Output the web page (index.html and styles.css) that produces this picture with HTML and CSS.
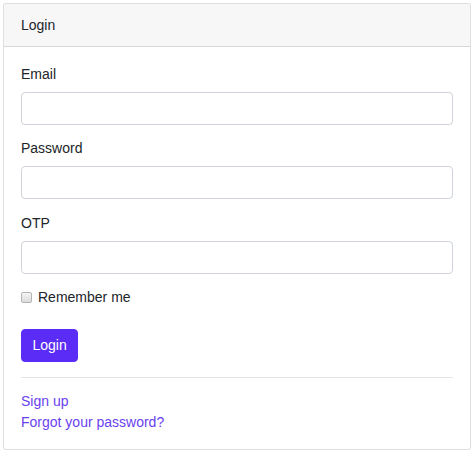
FILE: index.html
```html
<!DOCTYPE html>
<html lang="en">
<head>
<meta charset="utf-8">
<title>Login</title>
<link rel="stylesheet" href="styles.css">
</head>
<body>
<div class="card">
  <div class="card-header">Login</div>
  <div class="card-body">
    <form class="form">
      <div class="form-group">
        <label class="label" for="email">Email</label>
        <input class="form-control" id="email" type="email">
      </div>
      <div class="form-group">
        <label class="label" for="password">Password</label>
        <input class="form-control" id="password" type="password">
      </div>
      <div class="form-group">
        <label class="label" for="otp">OTP</label>
        <input class="form-control" id="otp" type="text">
      </div>
      <div class="form-check">
        <input class="check" id="remember" type="checkbox">
        <label class="check-label" for="remember">Remember me</label>
      </div>
      <button class="btn" type="button">Login</button>
    </form>
    <hr class="divider">
    <div class="links">
      <a class="link" href="#">Sign up</a>
      <a class="link" href="#">Forgot your password?</a>
    </div>
  </div>
</div>
</body>
</html>
```

FILE: styles.css
```css
* { box-sizing: border-box; }
html, body { background: #fff; }
body {
  margin: 3px 3px 0 3px;
  font-family: "Liberation Sans", Arial, sans-serif;
  font-size: 14px;
  line-height: 21px;
  color: #212529;
}
.card {
  border: 1px solid rgba(0,0,0,0.125);
  border-radius: 3px;
  background: #fff;
}
.card-header {
  background: #f7f7f7;
  border-bottom: 1px solid rgba(0,0,0,0.125);
  padding: 10.5px 17px;
  border-radius: 3px 3px 0 0;
}
.card-body {
  padding: 16.5px 17px 17px;
}
.form { display: flex; flex-direction: column; }
.form-group {
  display: flex;
  flex-direction: column;
  margin-bottom: 13.5px;
}
.label { margin-bottom: 7px; }
.form-control {
  height: 33px;
  width: 100%;
  border: 1px solid #ced4da;
  border-radius: 4px;
  background: #fff;
  font: inherit;
  padding: 5px 10.5px;
}
.form-check {
  display: flex;
  align-items: center;
  margin-bottom: 21px;
}
.check {
  appearance: none;
  -webkit-appearance: none;
  width: 11px;
  height: 11px;
  margin: 0 6px 0 0;
  border: 1px solid #b4b4b4;
  border-radius: 2px;
  background: linear-gradient(#f4f4f4, #dcdcdc);
}
.btn {
  align-self: flex-start;
  height: 33px;
  padding: 0 10.5px;
  border: 1px solid #5a2cf5;
  border-radius: 4px;
  background: #5a2cf5;
  color: #fff;
  font: inherit;
}
.divider {
  margin: 15px 0 13px;
  border: 0;
  border-top: 1px solid rgba(0,0,0,0.1);
}
.links { display: flex; flex-direction: column; align-items: flex-start; }
.link {
  color: #6a3ff0;
  line-height: 20.5px;
  text-decoration: none;
}
```
